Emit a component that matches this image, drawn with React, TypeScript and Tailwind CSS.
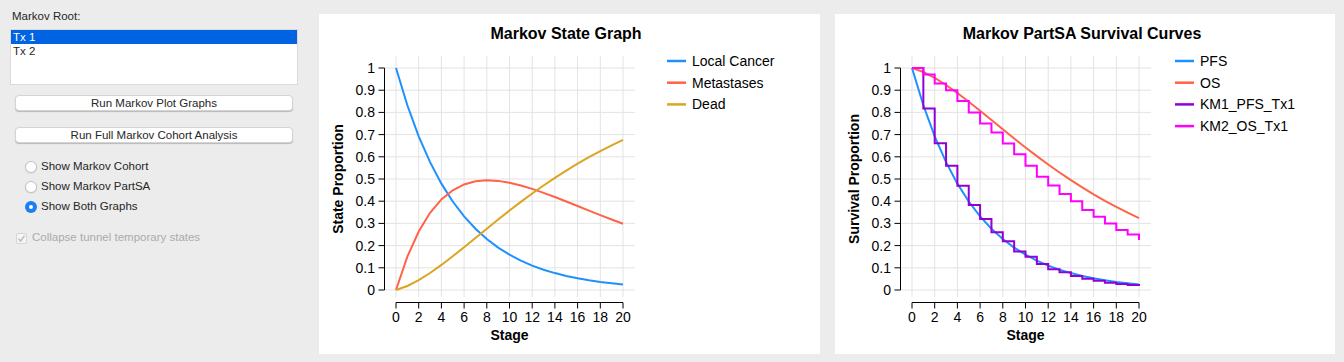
import React from 'react';

const X = (t: number) => 77 + t * 11.35;
const Y = (v: number) => 276 - v * 222;

// Markov trace: local cancer -> metastases -> dead
const stages = Array.from({ length: 21 }, (_, i) => i);
const local: number[] = [];
const mets: number[] = [];
let lc = 1;
let m = 0;
for (let t = 0; t <= 20; t++) {
  local.push(lc);
  mets.push(m);
  const nm = m * 0.925 + lc * 0.15;
  lc = lc * 0.832;
  m = nm;
}
const dead = stages.map((t) => 1 - local[t] - mets[t]);
const os = stages.map((t) => local[t] + mets[t]);

const km1 = [1, 0.818, 0.661, 0.56, 0.47, 0.383, 0.32, 0.26, 0.22, 0.173, 0.15, 0.117, 0.093, 0.08, 0.063, 0.051, 0.042, 0.033, 0.027, 0.0225, 0.018];
const km2 = [1, 0.971, 0.93, 0.9, 0.851, 0.8, 0.75, 0.71, 0.66, 0.611, 0.56, 0.51, 0.471, 0.432, 0.4, 0.36, 0.33, 0.3, 0.27, 0.25, 0.225];

const line = (vals: number[]) => vals.map((v, t) => `${X(t)},${Y(v)}`).join(' ');

const steps = (vals: number[]) => {
  let d = `M${X(0)},${Y(vals[0])}`;
  for (let t = 1; t <= 20; t++) {
    d += ` H${X(t)} V${Y(vals[t])}`;
  }
  return d;
};

type Legend = { label: string; color: string };

const Chart: React.FC<{
  title: string;
  yLabel: string;
  legend: Legend[];
  legendX: number;
  children: React.ReactNode;
}> = ({ title, yLabel, legend, legendX, children }) => {
  const yTicks = Array.from({ length: 11 }, (_, i) => i / 10);
  const xTicks = Array.from({ length: 11 }, (_, i) => i * 2);
  return (
    <svg width="100%" height="340" className="block">
      <text x={247} y={24.5} textAnchor="middle" fontSize={16} fontWeight="bold">
        {title}
      </text>

      {/* grid */}
      {xTicks.map((t) => (
        <line key={'gx' + t} x1={X(t)} x2={X(t)} y1={42} y2={283} stroke="#e3e3e3" />
      ))}
      {yTicks.map((v) => (
        <line key={'gy' + v} x1={66} x2={316} y1={Y(v)} y2={Y(v)} stroke="#e3e3e3" />
      ))}

      {/* y axis */}
      <line x1={65.5} x2={65.5} y1={Y(1)} y2={Y(0)} stroke="#000" />
      {yTicks.map((v) => (
        <g key={'ty' + v}>
          <line x1={59.5} x2={65.5} y1={Y(v)} y2={Y(v)} stroke="#000" />
          <text x={56} y={Y(v) + 5} textAnchor="end" fontSize={14}>
            {v === 0 ? '0' : v === 1 ? '1' : v.toFixed(1)}
          </text>
        </g>
      ))}
      <text
        transform={`translate(24,165) rotate(-90)`}
        textAnchor="middle"
        fontSize={14}
        fontWeight="bold"
      >
        {yLabel}
      </text>

      {/* x axis */}
      <line x1={X(0)} x2={X(20)} y1={288.5} y2={288.5} stroke="#000" />
      {xTicks.map((t) => (
        <g key={'tx' + t}>
          <line x1={X(t)} x2={X(t)} y1={288.5} y2={294.5} stroke="#000" />
          <text x={X(t)} y={307.5} textAnchor="middle" fontSize={14}>
            {t}
          </text>
        </g>
      ))}
      <text x={(X(0) + X(20)) / 2} y={325.5} textAnchor="middle" fontSize={14} fontWeight="bold">
        Stage
      </text>

      {children}

      {/* legend */}
      {legend.map((l, i) => {
        const y = 47 + i * 21.7;
        return (
          <g key={l.label}>
            <line x1={legendX} x2={legendX + 19} y1={y} y2={y} stroke={l.color} strokeWidth={2.5} />
            <text x={legendX + 25} y={y + 5} fontSize={14}>
              {l.label}
            </text>
          </g>
        );
      })}
    </svg>
  );
};

const Radio: React.FC<{ label: string; checked?: boolean }> = ({ label, checked }) => (
  <div className="flex h-[20px] items-center">
    {checked ? (
      <span className="ml-[25px] flex h-[12px] w-[12px] items-center justify-center rounded-full bg-[#1a7ef5]">
        <span className="h-[4px] w-[4px] rounded-full bg-white" />
      </span>
    ) : (
      <span className="ml-[25px] h-[12px] w-[12px] rounded-full border border-[#c4c4c4] bg-white shadow-[0_0.5px_1px_rgba(0,0,0,0.15)]" />
    )}
    <span className="ml-[4px]">{label}</span>
  </div>
);

const App: React.FC = () => {
  return (
    <div className="flex h-[362px] w-[1344px] overflow-hidden bg-[#ececec] font-['Liberation_Sans',Arial,sans-serif] text-[11.5px] text-[#262626]">
      {/* Controls */}
      <div className="flex w-[310px] shrink-0 flex-col pt-[9px]">
        <div className="ml-[12px] h-[14px] leading-[14px]">Markov Root:</div>
        <div className="ml-[10px] mt-[6px] h-[56px] w-[288px] border-[0.5px] border-[#dadada] bg-white">
          <div className="h-[14px] bg-[#0063e1] pl-[2px] leading-[14px] text-white">Tx 1</div>
          <div className="h-[14px] pl-[2px] leading-[14px]">Tx 2</div>
        </div>
        <button className="ml-[15px] mt-[10px] h-[16px] w-[278px] rounded-[4px] border-[0.5px] border-[#d4d4d4] bg-white leading-[14px] shadow-[0_1px_1px_rgba(0,0,0,0.22)]">
          Run Markov Plot Graphs
        </button>
        <button className="ml-[15px] mt-[16px] h-[16px] w-[278px] rounded-[4px] border-[0.5px] border-[#d4d4d4] bg-white leading-[14px] shadow-[0_1px_1px_rgba(0,0,0,0.22)]">
          Run Full Markov Cohort Analysis
        </button>
        <div className="mt-[14px] flex flex-col">
          <Radio label="Show Markov Cohort" />
          <Radio label="Show Markov PartSA" />
          <Radio label="Show Both Graphs" checked />
        </div>
        <div className="mt-[14px] flex h-[14px] items-center text-[#ababab]">
          <span className="ml-[16px] flex h-[11px] w-[11px] items-center justify-center rounded-[2px] border border-[#d6d6d6] bg-[#f5f5f5]">
            <svg width="9" height="9" viewBox="0 0 9 9">
              <path d="M1.5 4.8 L3.6 7 L7.6 1.6" fill="none" stroke="#bdbdbd" strokeWidth="1.5" />
            </svg>
          </span>
          <span className="ml-[5px]">Collapse tunnel temporary states</span>
        </div>
      </div>

      {/* Markov state graph */}
      <div className="ml-[9px] mt-[14px] h-[340px] w-[501px] shrink-0 bg-white">
        <Chart
          title="Markov State Graph"
          yLabel="State Proportion"
          legendX={348}
          legend={[
            { label: 'Local Cancer', color: '#1e90ff' },
            { label: 'Metastases', color: '#ff6347' },
            { label: 'Dead', color: '#daa520' },
          ]}
        >
          <polyline points={line(local)} fill="none" stroke="#1e90ff" strokeWidth={2} />
          <polyline points={line(mets)} fill="none" stroke="#ff6347" strokeWidth={2} />
          <polyline points={line(dead)} fill="none" stroke="#daa520" strokeWidth={2} />
        </Chart>
      </div>

      {/* PartSA survival curves */}
      <div className="ml-[15px] mt-[14px] h-[340px] w-[500px] shrink-0 bg-white">
        <Chart
          title="Markov PartSA Survival Curves"
          yLabel="Survival Proportion"
          legendX={340}
          legend={[
            { label: 'PFS', color: '#1e90ff' },
            { label: 'OS', color: '#ff6347' },
            { label: 'KM1_PFS_Tx1', color: '#9400d3' },
            { label: 'KM2_OS_Tx1', color: '#ff00ff' },
          ]}
        >
          <polyline points={line(local)} fill="none" stroke="#1e90ff" strokeWidth={2} />
          <polyline points={line(os)} fill="none" stroke="#ff6347" strokeWidth={2} />
          <path d={steps(km1)} fill="none" stroke="#9400d3" strokeWidth={2} />
          <path d={steps(km2)} fill="none" stroke="#ff00ff" strokeWidth={2} />
        </Chart>
      </div>
    </div>
  );
};

export default App;
